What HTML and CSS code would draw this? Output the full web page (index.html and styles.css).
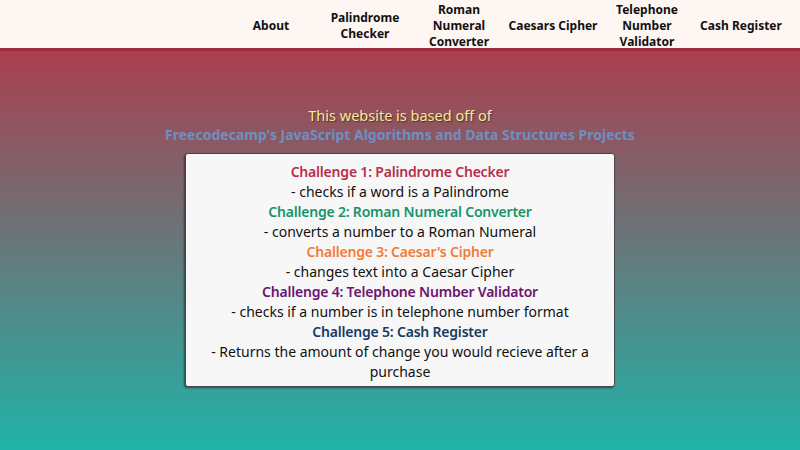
FILE: index.html
```html
<!DOCTYPE html>
<html>
<head>
<meta charset="utf-8">
<link rel="stylesheet" href="styles.css">
</head>
<body>
<header class="topbar">
  <nav>
    <ul class="nav-list">
      <li>About</li>
      <li>Palindrome Checker</li>
      <li>Roman Numeral Converter</li>
      <li>Caesars Cipher</li>
      <li>Telephone Number Validator</li>
      <li>Cash Register</li>
    </ul>
  </nav>
</header>
<main class="content">
  <p class="intro">This website is based off of</p>
  <p class="source">Freecodecamp's JavaScript Algorithms and Data Structures Projects</p>
  <section class="card">
    <p class="title c1">Challenge 1: Palindrome Checker</p>
    <p>- checks if a word is a Palindrome</p>
    <p class="title c2">Challenge 2: Roman Numeral Converter</p>
    <p>- converts a number to a Roman Numeral</p>
    <p class="title c3">Challenge 3: Caesar's Cipher</p>
    <p>- changes text into a Caesar Cipher</p>
    <p class="title c4">Challenge 4: Telephone Number Validator</p>
    <p>- checks if a number is in telephone number format</p>
    <p class="title c5">Challenge 5: Cash Register</p>
    <p>- Returns the amount of change you would recieve after a purchase</p>
  </section>
</main>
</body>
</html>
```
FILE: styles.css
```css
* { box-sizing: border-box; }
html, body {
  margin: 0;
  padding: 0;
  height: 100%;
}
body {
  font-family: "Noto Sans", "Open Sans", sans-serif;
  background: linear-gradient(to bottom, #aa3f4f 0px, #aa3f4f 51px, #20b3a8 450px);
  min-height: 450px;
  overflow: hidden;
}
.topbar {
  height: 51px;
  background: #fdf6f3;
  border-bottom: 3px solid #9b2c3c;
}
.nav-list {
  list-style: none;
  margin: 0;
  padding: 3px 12px 0 0;
  height: 48px;
  display: flex;
  justify-content: flex-end;
  align-items: center;
}
.nav-list li {
  width: 94px;
  padding: 0 2px;
  text-align: center;
  font-weight: 700;
  font-size: 12px;
  line-height: 16px;
  color: #111;
}
.content {
  display: flex;
  flex-direction: column;
  align-items: center;
  padding-top: 54px;
}
.content p { margin: 0; }
.intro {
  font-size: 14.5px;
  line-height: 20px;
  color: #f3eb9a;
  text-shadow: 1px 1px 1px rgba(0,0,0,0.45);
}
.source {
  font-size: 14px;
  line-height: 19px;
  font-weight: 700;
  color: #6c90c2;
}
.card {
  margin-top: 9px;
  width: 430px;
  background: #f7f7f7;
  border: 1px solid #4a4a4a;
  border-radius: 3px;
  box-shadow: -1px 1px 2px rgba(0,0,0,0.5);
  padding: 8px 18px 4px;
  text-align: center;
  font-size: 14px;
  line-height: 20px;
  color: #111;
}
.card .title {
  font-weight: 600;
  letter-spacing: -0.2px;
}
.c1 { color: #b52f4b; }
.c2 { color: #17936a; }
.c3 { color: #f07c3a; }
.c4 { color: #6b1470; }
.c5 { color: #173a64; }
```
